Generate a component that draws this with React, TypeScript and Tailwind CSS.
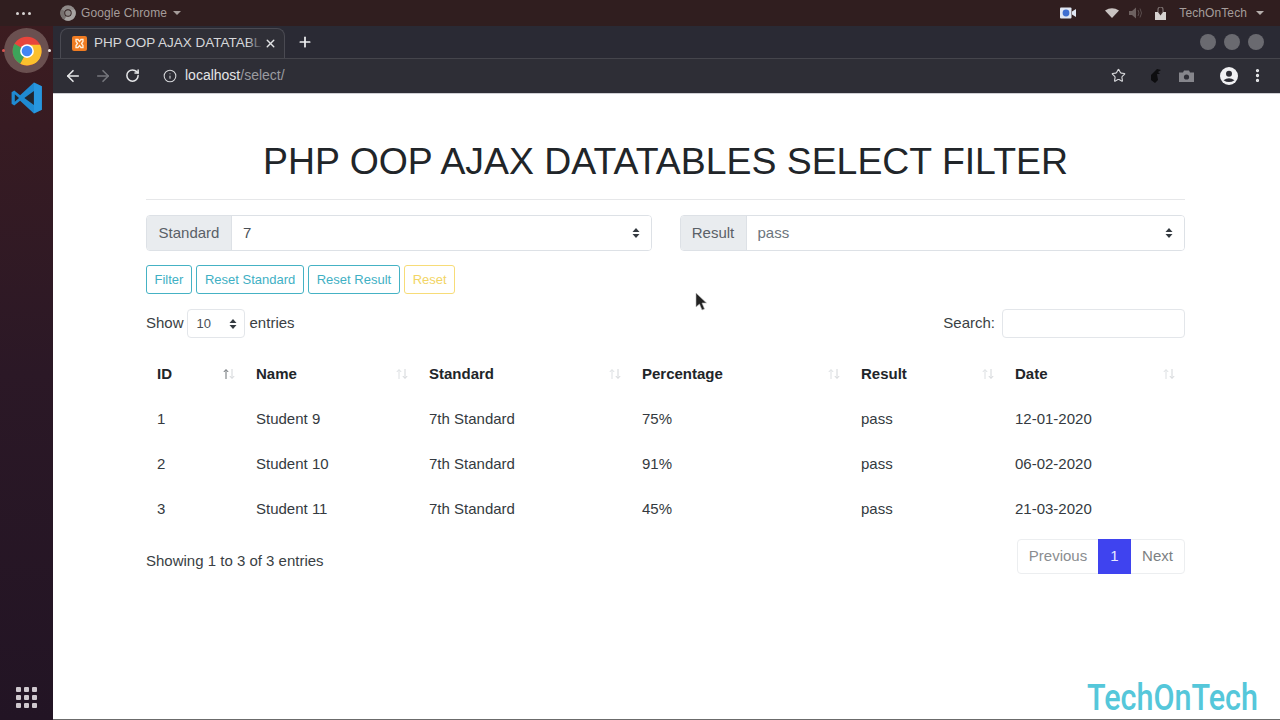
import { ArrowLeft, ArrowRight, RotateCw, Info, Star, Plus, X, EllipsisVertical } from 'lucide-react';

const rows = [
    { id: 1, name: 'Student 9', standard: '7th Standard', percentage: '75%', result: 'pass', date: '12-01-2020' },
    { id: 2, name: 'Student 10', standard: '7th Standard', percentage: '91%', result: 'pass', date: '06-02-2020' },
    { id: 3, name: 'Student 11', standard: '7th Standard', percentage: '45%', result: 'pass', date: '21-03-2020' },
];

const columns = [
    { label: 'ID', width: 'w-[99px]', active: true },
    { label: 'Name', width: 'w-[173px]', active: false },
    { label: 'Standard', width: 'w-[213px]', active: false },
    { label: 'Percentage', width: 'w-[219px]', active: false },
    { label: 'Result', width: 'w-[154px]', active: false },
    { label: 'Date', width: 'w-[181px]', active: false },
];

function ChromeLogo({ size, mono }: { size: number; mono?: boolean }) {
    return (
        <svg width={size} height={size} viewBox="0 0 48 48">
            <circle cx="24" cy="24" r="23" fill={mono ? '#8f8a88' : '#e8453c'} />
            <path d="M24 24 L44 35.5 A23 23 0 0 1 13 44.2 Z" fill={mono ? '#a8a4a2' : '#fbc02d'} />
            <path d="M24 24 L13 44.2 A23 23 0 0 1 4 12.5 Z" fill={mono ? '#77716f' : '#3da35a'} />
            <path d="M24 14 H45 A23 23 0 0 1 36 44 L24 24 Z" fill={mono ? '#a8a4a2' : '#fbc02d'} />
            <circle cx="24" cy="24" r="11" fill={mono ? '#2f1e1e' : '#ffffff'} />
            <circle cx="24" cy="24" r="8.5" fill={mono ? '#8f8a88' : '#4285f4'} />
        </svg>
    );
}

function VsCodeLogo() {
    return (
        <svg width="34" height="34" viewBox="0 0 32 32">
            <path d="M22.5 1.5 L30 5 V27 L22.5 30.5 L9.5 18.5 L4 23 L1.5 21.5 V10.5 L4 9 L9.5 13.5 Z" fill="#1f8ad2" />
            <path d="M22.5 9.5 L13.5 16 L22.5 22.5 Z" fill="#21252f" />
            <path d="M4.5 12.5 L8.5 16 L4.5 19.5 Z" fill="#21252f" />
            <path d="M22.5 1.5 L30 5 V27 L22.5 30.5 Z" fill="#2da1ea" fillOpacity="0.55" />
        </svg>
    );
}

function XamppIcon() {
    return (
        <svg width="15" height="15" viewBox="0 0 15 15" className="shrink-0">
            <rect width="15" height="15" rx="2" fill="#f07c22" />
            <path d="M4 3.5 H6 L7.5 5.5 L9 3.5 H11 V5.5 L9.5 7.5 L11 9.5 V11.5 H9 L7.5 9.5 L6 11.5 H4 V9.5 L5.5 7.5 L4 5.5 Z" fill="none" stroke="#fff1dc" strokeWidth="1.3" />
        </svg>
    );
}

function SelectCaret() {
    return (
        <svg width="8" height="12" viewBox="0 0 8 12" className="shrink-0">
            <path d="M4 1 L7.5 5 H0.5 Z M4 11 L0.5 7 H7.5 Z" fill="#343a40" />
        </svg>
    );
}

function SortArrows({ active }: { active: boolean }) {
    return (
        <svg width="14" height="12" viewBox="0 0 14 12" className="shrink-0">
            <path d="M4 11 V2 M1.8 4 L4 1.5 L6.2 4" fill="none" stroke={active ? '#6b7075' : '#dcdfe2'} strokeWidth="1" />
            <path d="M10 1 V10 M7.8 8 L10 10.5 L12.2 8" fill="none" stroke="#d3d6d9" strokeWidth="1" />
        </svg>
    );
}

function TopBar() {
    return (
        <div className="h-[26px] shrink-0 bg-[#301e1f] flex items-center text-[12px] text-[#a59d9b]">
            <div className="w-[46px] flex justify-center gap-[3px]">
                <span className="w-[3px] h-[3px] rounded-full bg-[#d8d4d2]" />
                <span className="w-[3px] h-[3px] rounded-full bg-[#d8d4d2]" />
                <span className="w-[3px] h-[3px] rounded-full bg-[#d8d4d2]" />
            </div>
            <div className="ml-[14px] flex items-center gap-[5px]">
                <ChromeLogo size={16} mono />
                <span className="tracking-[0.1px]">Google Chrome</span>
                <span className="ml-[1px] w-0 h-0 border-x-[4px] border-x-transparent border-t-[4px] border-t-[#a59d9b]" />
            </div>
            <div className="ml-auto flex items-center pr-[16px]">
                <svg width="16" height="12" viewBox="0 0 16 12" className="mr-[29px]">
                    <rect x="0" y="0.5" width="11.5" height="11" rx="1" fill="#dfe6f2" />
                    <circle cx="6" cy="6" r="3.4" fill="#3f6fd1" />
                    <path d="M12 4.5 L16 2 V10 L12 7.5 Z" fill="#dfe6f2" />
                </svg>
                <svg width="14" height="10" viewBox="0 0 14 10" className="mr-[10px]">
                    <path d="M0 2.5 Q7 -2 14 2.5 L7 10 Z" fill="#c9c4c2" />
                </svg>
                <svg width="14" height="12" viewBox="0 0 14 12" className="mr-[12px]">
                    <path d="M0 4 H3 L7 0.5 V11.5 L3 8 H0 Z" fill="#6d6160" />
                    <path d="M9 3 Q11 6 9 9 M11 1.5 Q14 6 11 10.5" fill="none" stroke="#5a4d4d" strokeWidth="1" />
                </svg>
                <svg width="11" height="13" viewBox="0 0 11 13" className="mr-[13px]">
                    <path d="M3 5 V2.5 A2.5 2.5 0 0 1 8 2.5 V5" fill="none" stroke="#7a6f6e" strokeWidth="1.2" />
                    <rect x="0" y="5" width="11" height="8" fill="#d6d2d0" />
                    <path d="M3 5 H8 L5.5 8.5 Z" fill="#3a2a2a" />
                </svg>
                <span className="tracking-[0.1px]">TechOnTech</span>
                <span className="ml-[9px] w-0 h-0 border-x-[4px] border-x-transparent border-t-[4px] border-t-[#b5aeac]" />
            </div>
        </div>
    );
}

function Dock() {
    return (
        <div className="w-[53px] shrink-0 flex flex-col items-center bg-gradient-to-b from-[#3c1c20] via-[#2b1826] to-[#221424]">
            <div className="relative mt-[2px] w-[45px] h-[45px] rounded-full bg-[#6a5050] flex items-center justify-center">
                <ChromeLogo size={30} />
                <span className="absolute left-[-2px] top-[21px] w-[3px] h-[3px] rounded-full bg-[#d9534f]" />
                <span className="absolute right-[-2px] top-[21px] w-[3px] h-[3px] rounded-full bg-[#eee7e5]" />
            </div>
            <div className="mt-[8px]">
                <VsCodeLogo />
            </div>
            <div className="mt-auto mb-[12px] grid grid-cols-3 gap-[3px]">
                {Array.from({ length: 9 }).map((_, i) => (
                    <span key={i} className="w-[5px] h-[5px] rounded-[1px] bg-[#cfc8ce]" />
                ))}
            </div>
        </div>
    );
}

function ChromeBar() {
    return (
        <div className="shrink-0 text-[#e8eaed]">
            {/* Tab strip */}
            <div className="h-[32px] bg-[#2a2a34] flex items-end pl-[7px]">
                <div className="w-[225px] h-[30px] bg-[#2f2f37] rounded-t-[8px] border border-b-0 border-[#4a4a52] flex items-center pl-[11px] pr-[13px]">
                    <XamppIcon />
                    <div className="relative ml-[7px] flex-1 flex items-center">
                        <span className="text-[13.5px] text-[#d6d7da] whitespace-nowrap">PHP OOP AJAX DATATABL</span>
                        <span className="absolute right-[-2px] top-0 bottom-0 w-[16px] bg-gradient-to-r from-transparent to-[#2f2f37]" />
                    </div>
                    <X size={13} strokeWidth={2.6} className="ml-[3px] text-[#e2e3e5] shrink-0" />
                </div>
                <Plus size={16} strokeWidth={2.6} className="ml-[12px] mb-[8px] text-[#eeeff1]" />
                <div className="ml-auto mb-[8px] mr-[16px] flex gap-[8px]">
                    <span className="w-[16px] h-[16px] rounded-full bg-[#6a6a70]" />
                    <span className="w-[16px] h-[16px] rounded-full bg-[#6a6a70]" />
                    <span className="w-[16px] h-[16px] rounded-full bg-[#6a6a70]" />
                </div>
            </div>
            {/* Toolbar */}
            <div className="h-[35px] bg-[#2e2e36] border-t border-[#45454c] flex items-center pb-[1px] pl-[11px] pr-[14px]">
                <ArrowLeft size={18} strokeWidth={2.2} className="text-[#e6e7e9]" />
                <ArrowRight size={18} strokeWidth={2.2} className="ml-[12px] text-[#75767c]" />
                <RotateCw size={15} strokeWidth={2.4} className="ml-[13px] text-[#e6e7e9]" />
                <Info size={14} strokeWidth={1.8} className="ml-[23px] text-[#d6d7da]" />
                <span className="ml-[8px] text-[14px]">
                    <span className="text-[#e4e5e7]">localhost</span>
                    <span className="text-[#9a9ba0]">/select/</span>
                </span>
                <div className="ml-auto flex items-center">
                    <Star size={15} strokeWidth={1.8} className="text-[#d6d7da]" />
                    <svg width="12" height="14" viewBox="0 0 12 14" className="ml-[24px]">
                        <path d="M7 0 L11 1 L8 3 L10 5 L7 5 L8 11 L5 14 L1 11 L1 6 L5 2 Z" fill="#0d0d0f" />
                    </svg>
                    <svg width="15" height="12" viewBox="0 0 15 12" className="ml-[17px]">
                        <path d="M0 2.5 H4 L5 0.5 H10 L11 2.5 H15 V12 H0 Z" fill="#86868c" />
                        <circle cx="7.5" cy="7" r="2.6" fill="#2e2e36" />
                    </svg>
                    <svg width="18" height="18" viewBox="0 0 18 18" className="ml-[26px]">
                        <circle cx="9" cy="9" r="9" fill="#f1f1f3" />
                        <circle cx="9" cy="6.8" r="3" fill="#2e2e36" />
                        <path d="M3.5 13.2 Q9 9.2 14.5 13.2 Q9 17 3.5 13.2 Z" fill="#2e2e36" />
                    </svg>
                    <EllipsisVertical size={17} strokeWidth={2.6} className="ml-[11px] text-[#eeeff1]" />
                </div>
            </div>
        </div>
    );
}

function InputGroup({ label, value, labelWidth, valueColor }: { label: string; value: string; labelWidth: string; valueColor: string }) {
    return (
        <div className="flex-1 h-[36px] flex rounded-[4px] border border-[#dde1e6] overflow-hidden">
            <div className={`${labelWidth} bg-[#e9ecef] border-r border-[#dde1e6] flex items-center justify-center text-[#5a6067]`}>{label}</div>
            <div className="flex-1 flex items-center justify-between pl-[11px] pr-[11px] bg-white">
                <span className={valueColor}>{value}</span>
                <SelectCaret />
            </div>
        </div>
    );
}

function OutlineButton({ label, tone }: { label: string; tone: 'info' | 'warning' }) {
    return (
        <button
            className={`h-[29px] px-[7.5px] rounded-[3px] border text-[13px] ${tone === 'info' ? 'border-[#45b2c4] text-[#3fb0c4]' : 'border-[#f7dc78] text-[#f2d565]'}`}
        >
            {label}
        </button>
    );
}

function DataPage() {
    return (
        <div className="relative flex-1 bg-white border-t border-b border-t-[#cfcfd4] border-b-[#6b6b6b] text-[15px] text-[#212529]">
            <div className="w-[1039px] ml-[93px]">
                <h1 className="mt-[46px] text-center text-[37.4px] leading-[43px] text-[#212529]">PHP OOP AJAX DATATABLES SELECT FILTER</h1>
                <hr className="mt-[16px] border-[#e6e7e9]" />

                <div className="mt-[15px] flex gap-[28px]">
                    <InputGroup label="Standard" value="7" labelWidth="w-[85px]" valueColor="text-[#495057]" />
                    <InputGroup label="Result" value="pass" labelWidth="w-[66px]" valueColor="text-[#6c757d]" />
                </div>

                <div className="mt-[14px] flex gap-[4.5px]">
                    <OutlineButton label="Filter" tone="info" />
                    <OutlineButton label="Reset Standard" tone="info" />
                    <OutlineButton label="Reset Result" tone="info" />
                    <OutlineButton label="Reset" tone="warning" />
                </div>

                <div className="mt-[15px] flex items-center justify-between h-[29px] text-[#3a3f44]">
                    <div className="flex items-center">
                        <span>Show</span>
                        <div className="ml-[3px] w-[58px] h-[29px] rounded-[4px] border border-[#e3e6ea] flex items-center justify-between pl-[9px] pr-[7px] text-[13px] text-[#495057]">
                            10
                            <SelectCaret />
                        </div>
                        <span className="ml-[5px]">entries</span>
                    </div>
                    <div className="flex items-center">
                        <span>Search:</span>
                        <div className="ml-[7px] w-[183px] h-[29px] rounded-[4px] border border-[#e3e6ea] bg-white" />
                    </div>
                </div>

                <table className="mt-[13px] w-full table-fixed border-collapse">
                    <thead>
                        <tr className="h-[46px]">
                            {columns.map((col) => (
                                <th key={col.label} className={`${col.width} pl-[11px] pr-[9px] text-left font-bold`}>
                                    <div className="flex items-center justify-between">
                                        {col.label}
                                        <SortArrows active={col.active} />
                                    </div>
                                </th>
                            ))}
                        </tr>
                    </thead>
                    <tbody>
                        {rows.map((row) => (
                            <tr key={row.id} className="h-[45px] text-[#343a40]">
                                <td className="pl-[11px]">{row.id}</td>
                                <td className="pl-[11px]">{row.name}</td>
                                <td className="pl-[11px]">{row.standard}</td>
                                <td className="pl-[11px]">{row.percentage}</td>
                                <td className="pl-[11px]">{row.result}</td>
                                <td className="pl-[11px]">{row.date}</td>
                            </tr>
                        ))}
                    </tbody>
                </table>

                <div className="mt-[7px] flex items-start justify-between">
                    <span className="mt-[11px] text-[#3a3f44]">Showing 1 to 3 of 3 entries</span>
                    <div className="h-[35px] flex rounded-[4px] border border-[#eceef0] text-[#8a8d90]">
                        <span className="w-[80px] flex items-center justify-center">Previous</span>
                        <span className="w-[33px] -my-[1px] flex items-center justify-center bg-[#3f43ef] text-[#e8e9ff]">1</span>
                        <span className="w-[53px] flex items-center justify-center text-[#7c7f82]">Next</span>
                    </div>
                </div>
            </div>

            {/* Screen recorder cursor and channel watermark */}
            <svg width="14" height="20" viewBox="0 0 14 20" className="absolute left-[642px] top-[198px]">
                <path d="M1 1 L1 15 L4.5 12 L7 18 L9.5 17 L7 11 L11.5 11 Z" fill="#222" stroke="#bbb" strokeWidth="0.6" />
            </svg>
            <span className="absolute left-[1034px] top-[582px] origin-left scale-x-[0.825] font-['Roboto',sans-serif] font-medium text-[37px] leading-[44px] text-[#55c7da]">TechOnTech</span>
        </div>
    );
}

export default function App() {
    return (
        <div className="w-[1280px] h-[720px] overflow-hidden flex flex-col font-['Liberation_Sans',Arial,sans-serif]">
            <TopBar />
            <div className="flex-1 flex min-h-0">
                <Dock />
                <div className="flex-1 flex flex-col min-w-0">
                    <ChromeBar />
                    <DataPage />
                </div>
            </div>
        </div>
    );
}
